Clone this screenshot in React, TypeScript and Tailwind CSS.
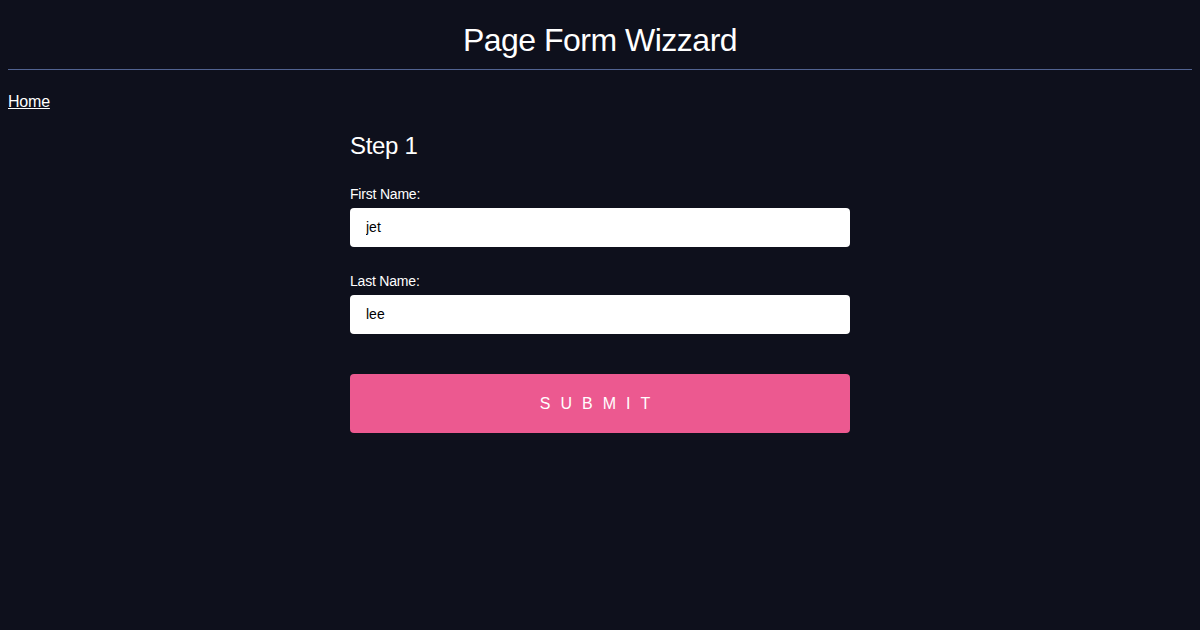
export default function App() {
  return (
    <div className="min-h-screen bg-[#0e101c] px-2 pt-[22px] text-white font-['Liberation_Sans',Arial,sans-serif]">
      <h1 className="text-center text-[32px] font-thin leading-[37px] tracking-[-0.5px]">Page Form Wizzard</h1>
      <hr className="mt-[10px] border-0 border-t border-[#516391]" />

      <a href="#" className="mt-[23px] inline-block text-[16px] leading-[18px] underline tracking-[-0.2px]">
        Home
      </a>

      <form className="mx-auto w-[500px]" onSubmit={(e) => e.preventDefault()}>
        <h2 className="mt-[18px] text-[24px] leading-[28px] font-light tracking-[-0.3px]">Step 1</h2>

        <label className="mt-[24px] mb-[4px] block text-[14px] leading-[20px] font-extralight tracking-[-0.2px]">
          First Name:
        </label>
        <input
          defaultValue="jet"
          className="block h-[39px] w-full rounded-[4px] bg-white px-[16px] pb-[1px] text-[14px] text-black outline-none"
        />

        <label className="mt-[24px] mb-[4px] block text-[14px] leading-[20px] font-extralight tracking-[-0.2px]">
          Last Name:
        </label>
        <input
          defaultValue="lee"
          className="block h-[39px] w-full rounded-[4px] bg-white px-[16px] pb-[1px] text-[14px] text-black outline-none"
        />

        <button
          type="submit"
          className="mt-[40px] block h-[59px] w-full rounded-[4px] bg-[#ec5990] text-[16px] font-thin uppercase tracking-[10px] text-white"
        >
          Submit
        </button>
      </form>
    </div>
  )
}
